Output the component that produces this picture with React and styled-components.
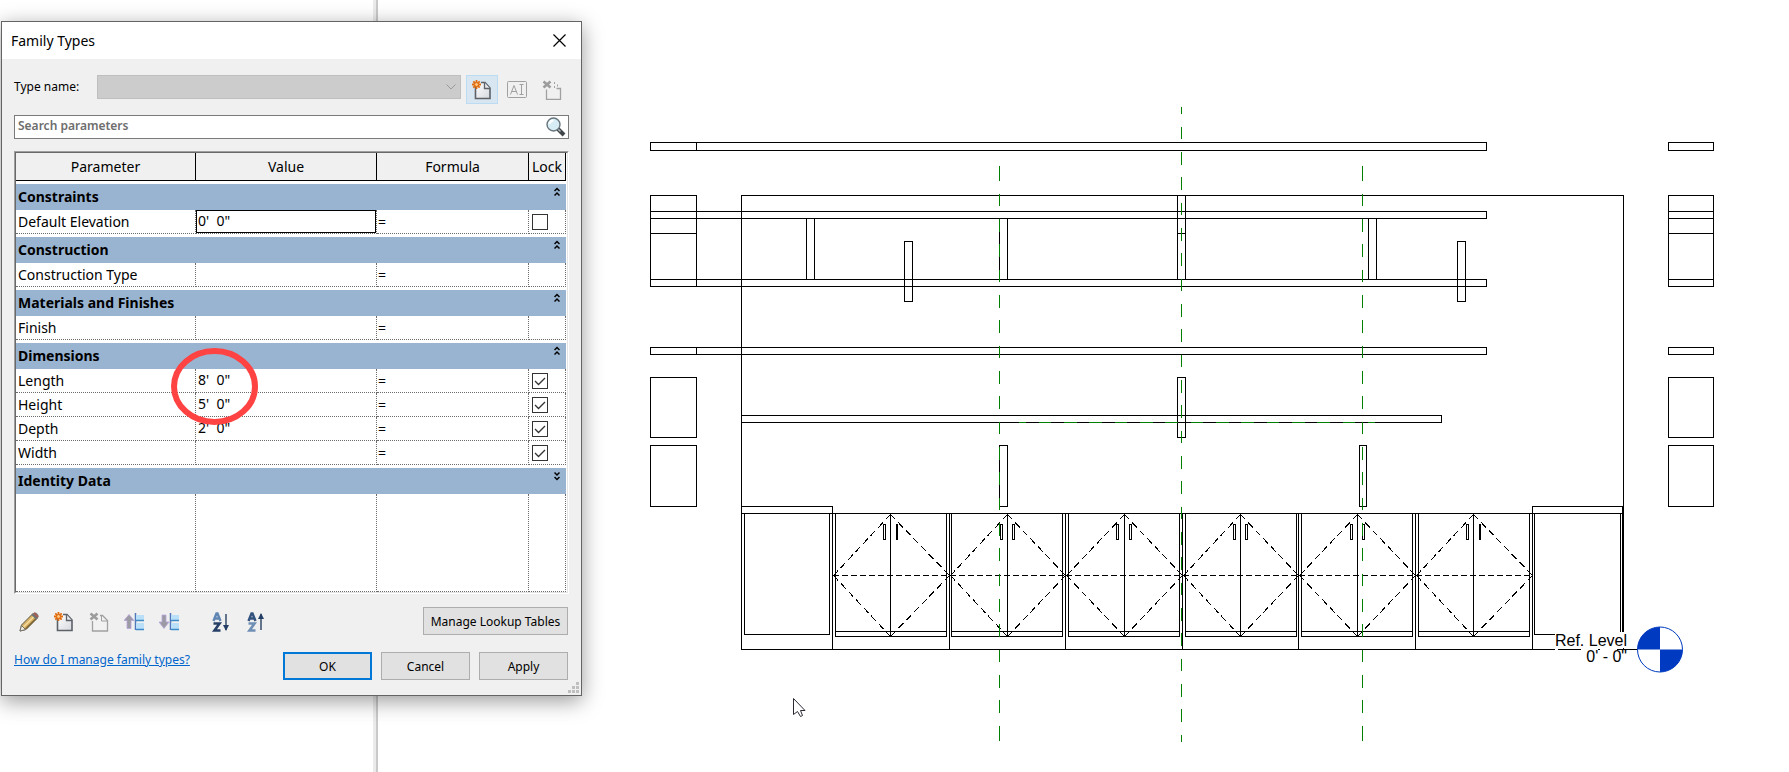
import { useState } from "react";
import styled, { createGlobalStyle, css } from "styled-components";

const GlobalStyle = createGlobalStyle`
  *, *::before, *::after {
    box-sizing: border-box;
  }

  body {
    margin: 0;
    background: #fff;
    color: #000;
    font-family: "Noto Sans", sans-serif;
  }

  button, input, select {
    margin: 0;
    font: inherit;
    color: inherit;
  }
`;

const Workspace = styled.div`
  position: relative;
  display: flex;
  min-height: 100vh;
`;

const Browser = styled.div`
  flex: 0 0 378px;
  border-right: 2px solid #c9c9c9;

  &::after {
    content: "";
    display: block;
    width: 3px;
    height: 100%;
    margin-left: auto;
    background: #ebebeb;
  }
`;

const Canvas = styled.main`
  flex: 1;
  min-width: 0;
`;

const Drawing = styled.svg`
  display: block;
  width: 100%;
  height: 100vh;
  font-family: "Liberation Sans", Arial, sans-serif;
  font-size: 16px;
`;

const Dialog = styled.section`
  position: absolute;
  top: 21px;
  left: 1px;
  width: 581px;
  background: #f0f0f0;
  border: 1px solid #646464;
  box-shadow: 0 5px 20px rgba(0, 0, 0, 0.4);
`;

const TitleBar = styled.header`
  display: flex;
  align-items: center;
  justify-content: space-between;
  height: 37px;
  padding: 0 9px;
  background: #fff;
`;

const Title = styled.h1`
  margin: 0;
  font-size: 14px;
  font-weight: normal;
`;

const CloseButton = styled.button`
  display: flex;
  padding: 6px;
  border: none;
  background: none;
`;

const Body = styled.div`
  padding: 16px 12px 15px;
`;

const TypeRow = styled.div`
  display: flex;
  align-items: flex-start;
  padding-right: 1px;
`;

const TypeLabel = styled.label`
  width: 83px;
  font-size: 12px;
  line-height: 24px;
`;

const SelectBox = styled.div`
  display: grid;
  flex: 1;
  align-items: center;
  margin-right: 5px;

  select, svg {
    grid-area: 1 / 1;
  }

  svg {
    z-index: 1;
    justify-self: end;
    margin-right: 5px;
    pointer-events: none;
  }
`;

const Select = styled.select`
  width: 100%;
  height: 24px;
  border: 1px solid #bfbfbf;
  border-radius: 0;
  background: #ccc;
  opacity: 1;
  appearance: none;
`;

const IconRow = styled.div`
  display: flex;
  gap: ${({ $gap }) => $gap}px;
`;

const IconButton = styled.button`
  display: flex;
  align-items: center;
  justify-content: center;
  width: ${({ $wide }) => ($wide ? 32 : 30)}px;
  height: 29px;
  padding: 0;
  border: 1px solid transparent;
  background: none;

  ${({ $active }) =>
    $active &&
    css`
      border-color: #bcdcf4;
      background: #d8e6f2;
    `}
`;

const Spacer = styled.span`
  width: 12px;
`;

const SearchBox = styled.div`
  display: flex;
  align-items: center;
  height: 24px;
  margin-top: 11px;
  padding: 0 2px 0 3px;
  border: 1px solid #7a7a7a;
  background: #fff;
`;

const SearchInput = styled.input`
  flex: 1;
  height: 20px;
  padding: 0 0 4px;
  border: none;
  outline: none;
  background: none;
  font-size: 12px;

  &::placeholder {
    color: #6d6d6d;
    font-weight: 600;
    opacity: 1;
  }
`;

const TableFrame = styled.div`
  margin-top: 12px;
  border: 1px solid;
  border-color: #a0a0a0 #fff #fff #a0a0a0;
`;

const Table = styled.table`
  width: 100%;
  padding-right: 1px;
  border: 1px solid;
  border-color: #696969 #e3e3e3 #e3e3e3 #696969;
  border-collapse: separate;
  border-spacing: 0;
  background: #fff;
  table-layout: fixed;
  font-size: 14px;
`;

const HeadCell = styled.th`
  width: ${({ $width }) => $width};
  height: 28px;
  padding: 0;
  border-right: 1px solid #000;
  border-bottom: 1px solid #000;
  background: #f0f0f0;
  font-weight: normal;
  line-height: 20px;
  white-space: nowrap;
`;

const GroupCell = styled.th`
  height: 29px;
  padding: 0 6px 0 2px;
  border-top: 3px solid #fff;
  background: #99b4d1;
  text-align: left;
  line-height: 20px;
`;

const GroupTitle = styled.div`
  display: flex;
  align-items: flex-start;
  justify-content: space-between;
`;

const FoldButton = styled.button`
  display: flex;
  padding: 0;
  border: none;
  background: none;
`;

const Cell = styled.td`
  height: ${({ $filler }) => ($filler ? 98 : 24)}px;
  padding: 0 0 0 ${({ $inset }) => $inset || 0}px;
  border-right: 1px dotted #6b6b6b;
  border-bottom: 1px dotted #6b6b6b;
  line-height: 20px;
  vertical-align: middle;
`;

const ValueInput = styled.input`
  display: block;
  width: 100%;
  height: 23px;
  padding: 0 1px 2px;
  border: 1px solid ${({ $active }) => ($active ? "#000" : "transparent")};
  outline: none;
  background: none;
  white-space: pre;
`;

const CheckLabel = styled.label`
  display: grid;
  width: 16px;
  height: 16px;

  input, svg {
    grid-area: 1 / 1;
  }

  svg {
    pointer-events: none;
  }
`;

const CheckInput = styled.input`
  width: 16px;
  height: 16px;
  border: 1px solid #333;
  background: #fff;
  appearance: none;
`;

const Footer = styled.footer`
  display: grid;
  gap: 16px;
  margin-top: 13px;
  padding-right: 1px;
`;

const FooterRow = styled.div`
  display: flex;
  align-items: flex-start;
  justify-content: space-between;
`;

const ButtonGroup = styled.div`
  display: flex;
  gap: 9px;
`;

const Button = styled.button`
  width: ${({ $wide }) => ($wide ? 145 : 89)}px;
  height: 28px;
  padding: 0;
  border: ${({ $primary }) => ($primary ? "2px solid #0078d7" : "1px solid #adadad")};
  background: #e1e1e1;
  font-size: 12px;
  white-space: nowrap;
`;

const HelpLink = styled.a`
  color: #0066cc;
  font-size: 12px;
  line-height: 16px;
`;

const Grip = styled.svg`
  position: absolute;
  right: 2px;
  bottom: 2px;
`;

const Markup = styled.svg`
  position: absolute;
  top: 326px;
  left: 169px;
  pointer-events: none;
`;

const groups = [
  { name: "Constraints", open: true, rows: [{ name: "Default Elevation", value: "0'  0\"", lock: false, active: true }] },
  { name: "Construction", open: true, rows: [{ name: "Construction Type", value: "" }] },
  { name: "Materials and Finishes", open: true, rows: [{ name: "Finish", value: "" }] },
  {
    name: "Dimensions",
    open: true,
    rows: [
      { name: "Length", value: "8'  0\"", lock: true },
      { name: "Height", value: "5'  0\"", lock: true },
      { name: "Depth", value: "2'  0\"", lock: true },
      { name: "Width", value: "", lock: true },
    ],
  },
  { name: "Identity Data", open: false, rows: [] },
];

const NewIcon = () => (
  <svg width="20" height="20" viewBox="0 0 20 20">
    <defs>
      <linearGradient id="sheet" x1="0" y1="0" x2="1" y2="1">
        <stop offset="0" stopColor="#fff" />
        <stop offset="1" stopColor="#d5d8de" />
      </linearGradient>
    </defs>
    <path d="M3.500 6v12.500h14.500V8L13 2.500H9" fill="url(#sheet)" stroke="#5d6168" strokeWidth="1.600" />
    <path d="M12.500 2.500v6h5.500" fill="#e8eaee" stroke="#5d6168" strokeWidth="1.300" />
    <path d="M4.500 0v9M0 4.500h9M1.300 1.300l6.400 6.400M7.700 1.300l-6.400 6.400" stroke="#e06c10" strokeWidth="1.800" />
    <circle cx="4.500" cy="4.500" r="2" fill="#ffc27a" stroke="#e06c10" />
  </svg>
);

const DeleteIcon = ({ outline }) => (
  <svg width="20" height="20" viewBox="0 0 20 20">
    <path
      d={outline ? "M4.500 9.500v10h14v-11h-4" : "M3.500 9v10h15V8.500L13.500 3.500H11"}
      fill={outline ? "none" : "#f1f1f1"}
      stroke="#a0a0a0"
      strokeWidth="1.300"
    />
    {outline ? (
      <path d="M12.500 2v2M12.500 6v2M15.500 4.500v2" stroke="#a0a0a0" />
    ) : (
      <path d="M12.500 3.500v5.500h6" fill="none" stroke="#a0a0a0" />
    )}
    <path d="M1.500 1.500l7 6M8.500 1.500l-7 6" stroke="#9c9c9c" strokeWidth="2.600" />
  </svg>
);

const RenameIcon = () => (
  <svg width="21" height="18" viewBox="0 0 21 18" fill="none" stroke="#a0a0a0">
    <rect x="0.500" y="0.500" width="19" height="16" rx="1" />
    <path d="M3.500 13.500l3.500-9 3.500 9M4.500 10.500h5" />
    <path d="M12.500 3.500h4M14.500 3.500v10M12.500 13.500h4" />
  </svg>
);

const PencilIcon = () => (
  <svg width="20" height="20" viewBox="0 0 20 20">
    <path d="M1 19l1.500-6L14 1.500l4.500 4.500L7 17.500z" fill="#d9b264" stroke="#5c5548" />
    <path d="M4.500 15L16 3.500" stroke="#f4dca0" strokeWidth="1.500" />
    <path d="M6.500 17L17.500 6" stroke="#7c6434" strokeWidth="1.500" />
    <path d="M1 19l1.500-5.500 4 4z" fill="#f5f0e4" stroke="#77736b" />
    <path d="M12.500 3l2.500-2.300q1.500-.7 3.300 1t1 3.600L17 7.500z" fill="#6e7278" />
    <path d="M15 1l4 4" stroke="#aa6054" strokeWidth="2" />
  </svg>
);

const MoveIcon = ({ down }) => (
  <svg width="20" height="20" viewBox="0 0 20 20">
    <path
      d={down ? "M3 3h4v7h3l-5 6.500L0 10h3z" : "M3 16.500h4v-8h3L5 2.500 0 8.500h3z"}
      fill="#9b9ba3"
      stroke="#b7a3dc"
      strokeWidth=".8"
    />
    <path d="M11.500 1v17" stroke="#5378b9" strokeWidth="1.500" />
    <path d="M12 3h8v6h-8zM12 11h8v7h-8z" fill="#b9e0f8" />
    <path d="M12 8.500h8M12 17.500h8" stroke="#3f8bc7" strokeWidth="1.500" />
  </svg>
);

const SortIcon = ({ up }) => (
  <svg width="20" height="20" viewBox="0 0 20 20" fill="none">
    <path d="M2.500 9L5.500 1.500h1L9.500 9M3.500 6.500h5" stroke={up ? "#33527d" : "#5f85b3"} strokeWidth="2.400" />
    <path d="M2.500 11.500h6l-5 7H9.500" stroke={up ? "#6f8fb5" : "#263f66"} strokeWidth="2.600" />
    <path d="M15 2v16" stroke="#344b6a" strokeWidth="1.500" />
    <path d={up ? "M12 7h6L15 1z" : "M12 13h6l-3 6z"} fill="#243f66" />
  </svg>
);

const SearchIcon = () => (
  <svg width="20" height="20" viewBox="0 0 20 20">
    <path d="M12 12l6 6" stroke="#41464b" strokeWidth="4" />
    <path d="M11.500 11.500l3 3" stroke="#b7bcc1" strokeWidth="1.500" />
    <circle cx="7.500" cy="7.500" r="6.500" fill="#d7edf5" stroke="#69757c" strokeWidth="1.400" />
    <path d="M3.500 7a4 4 0 0 1 4-3.500" stroke="#fff" strokeWidth="2" fill="none" />
  </svg>
);

const FoldIcon = ({ open }) => (
  <svg width="6" height="10" viewBox="0 0 6 10" fill="none" stroke="#000" strokeWidth="1.500">
    <path d={open ? "M.5 4L3 1.500 5.500 4M.5 8.500L3 6l2.500 2.500" : "M.5 1.500L3 4l2.500-2.500M.5 6L3 8.500 5.500 6"} />
  </svg>
);

const ParameterRow = ({ row }) => {
  const [value, setValue] = useState(row.value);
  const [locked, setLocked] = useState(row.lock);

  return (
    <tr>
      <Cell $inset={2}>{row.name}</Cell>
      <Cell>
        <ValueInput
          aria-label={row.name}
          $active={row.active}
          value={value}
          onChange={(e) => setValue(e.target.value)}
        />
      </Cell>
      <Cell $inset={1}>=</Cell>
      <Cell $inset={3}>
        {row.lock !== undefined && (
          <CheckLabel>
            <CheckInput
              type="checkbox"
              aria-label={`Lock ${row.name}`}
              checked={locked}
              onChange={() => setLocked(!locked)}
            />
            {locked && (
              <svg width="16" height="16" viewBox="0 0 16 16" fill="none" stroke="#333" strokeWidth="1.300">
                <path d="M3 8l3.500 3.500L13 5" />
              </svg>
            )}
          </CheckLabel>
        )}
      </Cell>
    </tr>
  );
};

const ParameterTable = () => (
  <TableFrame>
    <Table>
      <thead>
        <tr>
          <HeadCell $width="180px">Parameter</HeadCell>
          <HeadCell $width="181px">Value</HeadCell>
          <HeadCell $width="152px">Formula</HeadCell>
          <HeadCell>Lock</HeadCell>
        </tr>
      </thead>
      {groups.map((group) => (
        <tbody key={group.name}>
          <tr>
            <GroupCell colSpan={4}>
              <GroupTitle>
                {group.name}
                <FoldButton aria-label={`Toggle ${group.name}`}>
                  <FoldIcon open={group.open} />
                </FoldButton>
              </GroupTitle>
            </GroupCell>
          </tr>
          {group.rows.map((row) => (
            <ParameterRow key={row.name} row={row} />
          ))}
        </tbody>
      ))}
      <tbody>
        <tr>
          <Cell $filler />
          <Cell $filler />
          <Cell $filler />
          <Cell $filler />
        </tr>
      </tbody>
    </Table>
  </TableFrame>
);

const FamilyTypesDialog = () => (
  <Dialog role="dialog" aria-labelledby="dialog-title">
    <TitleBar>
      <Title id="dialog-title">Family Types</Title>
      <CloseButton aria-label="Close">
        <svg width="13" height="13" viewBox="0 0 13 13" stroke="#000" strokeWidth="1.200">
          <path d="M.5 .5l12 12M12.500 .5l-12 12" />
        </svg>
      </CloseButton>
    </TitleBar>
    <Body>
      <TypeRow>
        <TypeLabel htmlFor="type-name">Type name:</TypeLabel>
        <SelectBox>
          <Select id="type-name" disabled />
          <svg width="10" height="6" viewBox="0 0 10 6" fill="none" stroke="#9a9a9a">
            <path d="M.5 .5L5 5 9.500 .5" />
          </svg>
        </SelectBox>
        <IconRow $gap={3}>
          <IconButton $wide $active aria-label="New type">
            <NewIcon />
          </IconButton>
          <IconButton $wide disabled aria-label="Rename type">
            <RenameIcon />
          </IconButton>
          <IconButton $wide disabled aria-label="Delete type">
            <DeleteIcon outline />
          </IconButton>
        </IconRow>
      </TypeRow>
      <SearchBox>
        <SearchInput aria-label="Search parameters" placeholder="Search parameters" />
        <SearchIcon />
      </SearchBox>
      <ParameterTable />
      <Footer>
        <FooterRow>
          <IconRow $gap={5}>
            <IconButton aria-label="Edit parameter">
              <PencilIcon />
            </IconButton>
            <IconButton aria-label="New parameter">
              <NewIcon />
            </IconButton>
            <IconButton disabled aria-label="Delete parameter">
              <DeleteIcon />
            </IconButton>
            <IconButton disabled aria-label="Move up">
              <MoveIcon />
            </IconButton>
            <IconButton disabled aria-label="Move down">
              <MoveIcon down />
            </IconButton>
            <Spacer />
            <IconButton aria-label="Sort ascending">
              <SortIcon />
            </IconButton>
            <IconButton aria-label="Sort descending">
              <SortIcon up />
            </IconButton>
          </IconRow>
          <Button $wide>Manage Lookup Tables</Button>
        </FooterRow>
        <FooterRow>
          <HelpLink href="#help">How do I manage family types?</HelpLink>
          <ButtonGroup>
            <Button $primary>OK</Button>
            <Button>Cancel</Button>
            <Button>Apply</Button>
          </ButtonGroup>
        </FooterRow>
      </Footer>
    </Body>
    <Grip width="11" height="11" viewBox="0 0 11 11" fill="#bfbfbf">
      <path d="M8 0h3v3H8zM4 4h3v3H4zM8 4h3v3H8zM0 8h3v3H0zM4 8h3v3H4zM8 8h3v3H8z" />
    </Grip>
    <Markup width="87" height="77" viewBox="0 0 87 77" fill="none">
      <ellipse cx="43.500" cy="38.500" rx="40.500" ry="35.500" stroke="#ff4343" strokeWidth="6" />
    </Markup>
  </Dialog>
);

// [x, y, right, bottom] of every plain outline in the elevation
const boxes = [
  [650, 142, 1486, 150],
  [650, 211, 1486, 218],
  [650, 279, 1486, 286],
  [650, 347, 1486, 354],
  [741, 415, 1441, 422],
  [650, 195, 696, 286],
  [650, 377, 696, 437],
  [650, 445, 696, 506],
  [1668, 142, 1713, 150],
  [1668, 195, 1713, 286],
  [1668, 347, 1713, 354],
  [1668, 377, 1713, 437],
  [1668, 445, 1713, 506],
  [741, 195, 1623, 649],
  [806, 218, 814, 279],
  [904, 241, 912, 301],
  [999, 218, 1007, 279],
  [1177, 195, 1185, 279],
  [1177, 377, 1185, 437],
  [1368, 218, 1376, 279],
  [1457, 241, 1465, 301],
  [999, 445, 1007, 506],
  [1359, 445, 1366, 506],
  [741, 506, 832, 513],
  [744, 513, 829, 634],
  [1532, 506, 1622, 513],
  [1534, 513, 1620, 634],
];

const cabinets = [
  { start: 832, left: 835, mid: 890, right: 946, end: 949, handles: [[883, 885], [896, 897]] },
  { start: 949, left: 951, mid: 1007, right: 1062, end: 1065, handles: [[1000, 1002], [1012, 1014]] },
  { start: 1065, left: 1068, mid: 1124, right: 1179, end: 1182, handles: [[1116, 1118], [1129, 1131]] },
  { start: 1182, left: 1185, mid: 1240, right: 1296, end: 1298, handles: [[1233, 1235], [1245, 1247]] },
  { start: 1298, left: 1301, mid: 1357, right: 1412, end: 1415, handles: [[1350, 1352], [1362, 1364]] },
  { start: 1415, left: 1418, mid: 1473, right: 1529, end: 1532, handles: [[1466, 1468], [1479, 1480]] },
];

const Cabinet = ({ start, left, mid, right, end, handles }) => (
  <g>
    <path d={`M${start} 513V649M${end} 513V649M${left} 513V636H${right}V513M${left} 631H${right}M${mid} 513V636`} />
    <path
      d={`M${mid} 514L${start + 1} 575M${mid} 514L${end} 575M${start + 1} 575L${mid} 636M${end} 575L${mid} 636`}
      strokeDasharray="7 4"
    />
    <path d={`M${start} 575H${end}`} strokeDasharray="6 3" />
    {handles.map(([x, x2]) => (
      <rect key={x} x={x} y="524" width={x2 - x} height="15" />
    ))}
  </g>
);

const Elevation = () => (
  <Drawing viewBox="378 0 1411 772" role="img" aria-label="Front elevation">
    <g transform="translate(.5 .5)" fill="none" stroke="#000" shapeRendering="crispEdges">
      {boxes.map(([x, y, right, bottom]) => (
        <rect key={`${x}-${y}`} x={x} y={y} width={right - x} height={bottom - y} />
      ))}
      <path d="M696 142V150M696 347V354M650 233H696M1668 211H1713M1668 218H1713M1668 233H1713M1668 279H1713M1177 233H1185" />
      <path d="M741 513H1622M1622 506V634M1623 649H1637" />
      {cabinets.map((cabinet) => (
        <Cabinet key={cabinet.start} {...cabinet} />
      ))}
      <g stroke="#007f00">
        {[999, 1362].map((x) => (
          <g key={x}>
            <path d={`M${x} 165V180M${x} 727V740`} />
            <path d={`M${x} 193V738`} strokeDasharray="12.670 12.670" />
          </g>
        ))}
        <path d="M1181 106V113M1181 734V741M1018 422H1025" />
        <path d="M1181 126V721" strokeDasharray="12.670 12.670" />
        <path d="M1038 422H1374" strokeDasharray="12.670 12.670" />
      </g>
    </g>
    <path d="M1555 632h72v16h-72zM1555 648h3v4h-3zM1581 648h17v4h-17zM1600 648h17v4h-17zM1585 652h42v13h-42z" fill="#fff" />
    <g textAnchor="end">
      <text x="1627" y="646">Ref. Level</text>
      <text x="1627" y="662">0' - 0"</text>
    </g>
    <circle cx="1660" cy="649.500" r="22.500" fill="#fff" stroke="#003ac0" />
    <path d="M1660 649.500V627a22.500 22.500 0 0 0-22.500 22.500H1682.500A22.500 22.500 0 0 1 1660 672z" fill="#003ac0" />
    <path
      d="M793.500 698.500V714.500L797.500 711.500L800.500 716.500L802.500 715.500L800.500 710.500H805z"
      fill="#fff"
      stroke="#2a2a35"
    />
  </Drawing>
);

const App = () => (
  <>
    <GlobalStyle />
    <Workspace>
      <Browser />
      <Canvas>
        <Elevation />
      </Canvas>
      <FamilyTypesDialog />
    </Workspace>
  </>
);

export default App;
